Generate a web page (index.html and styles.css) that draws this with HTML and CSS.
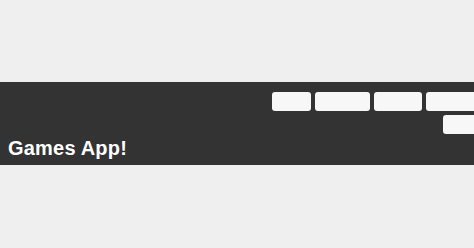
FILE: index.html
```html
<!DOCTYPE html>
<html>
<head>
<meta charset="utf-8">
<link rel="stylesheet" href="styles.css">
</head>
<body>
<header class="topbar">
  <nav class="nav">
    <button class="nav-btn w1"></button>
    <button class="nav-btn w2"></button>
    <button class="nav-btn w3"></button>
    <button class="nav-btn w4"></button>
    <button class="nav-btn w5"></button>
  </nav>
  <h1 class="title">Games App!</h1>
</header>
</body>
</html>
```
FILE: styles.css
```css
html {
  overflow: hidden;
}
body {
  margin: 0;
  padding-top: 82px;
  background: #efefef;
  font-family: "Liberation Sans", Arial, sans-serif;
}
.topbar {
  background: #333333;
  height: 83px;
  box-sizing: border-box;
  padding: 10px 8px 0 8px;
  display: flex;
  flex-direction: column;
}
.nav {
  align-self: flex-end;
  margin-right: -20px;
  width: 214px;
  display: flex;
  flex-wrap: wrap;
  justify-content: flex-end;
  gap: 4px;
}
.nav-btn {
  height: 19px;
  border: none;
  border-radius: 3px;
  background: #f7f7f7;
  padding: 0;
  margin: 0;
}
.w1 { width: 39px; }
.w2 { width: 55px; }
.w3 { width: 48px; }
.w4 { width: 60px; }
.w5 { width: 43px; }
.title {
  margin: 3px 0 0 0;
  font-size: 20px;
  font-weight: bold;
  line-height: 23px;
  letter-spacing: 0.2px;
  color: #ffffff;
}
```
